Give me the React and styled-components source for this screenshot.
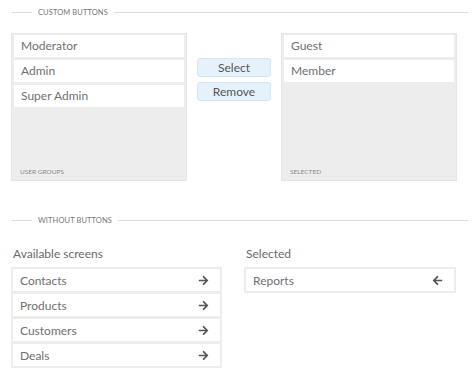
import React from 'react'
import styled, { createGlobalStyle } from 'styled-components'
import { FaArrowRight, FaArrowLeft } from 'react-icons/fa'

const GlobalStyle = createGlobalStyle`
    body {
        margin: 0;
        background: #fff;
        font-family: Lato, "Open Sans", sans-serif;
        color: #666;
    }
`;

function Legend({ children }) {
    return (
        <LegendRow>
            <LegendLine short />
            <LegendText>{children}</LegendText>
            <LegendLine />
        </LegendRow>
    )
}

function ListBox({ items, label }) {
    return (
        <Box>
            {items.map(item => <BoxItem key={item}>{item}</BoxItem>)}
            <BoxLabel>{label}</BoxLabel>
        </Box>
    )
}

function ArrowList({ title, items, direction }) {
    return (
        <Column>
            <ColumnTitle>{title}</ColumnTitle>
            <List>
                {items.map(item => (
                    <ListItem key={item}>
                        {item}
                        <ArrowIcon>{direction === 'left' ? <FaArrowLeft /> : <FaArrowRight />}</ArrowIcon>
                    </ListItem>
                ))}
            </List>
        </Column>
    )
}

function App() {
    return (
        <Page>
            <GlobalStyle />
            <Legend>Custom buttons</Legend>
            <DualList>
                <ListBox items={['Moderator', 'Admin', 'Super Admin']} label="User groups" />
                <Buttons>
                    <Button>Select</Button>
                    <Button>Remove</Button>
                </Buttons>
                <ListBox items={['Guest', 'Member']} label="Selected" />
            </DualList>
            <Legend>Without buttons</Legend>
            <Columns>
                <ArrowList title="Available screens" items={['Contacts', 'Products', 'Customers', 'Deals']} />
                <ArrowList title="Selected" items={['Reports']} direction="left" />
            </Columns>
        </Page>
    )
}

export default App

const Page = styled.div`
    width: 474px;
    height: 375px;
    padding: 6px 6px 0 11px;
    box-sizing: border-box;
    overflow: hidden;
`;

const LegendRow = styled.div`
    display: flex;
    align-items: center;
    height: 12px;
    margin-left: 1px;
`;

const LegendLine = styled.div`
    height: 1px;
    background: #dcdcdc;
    flex: ${p => p.short ? '0 0 20px' : '1'};
`;

const LegendText = styled.span`
    font-size: 7.5px;
    text-transform: uppercase;
    color: #777;
    padding: 0 6px;
    letter-spacing: 0.1px;
`;

const DualList = styled.div`
    display: grid;
    grid-template-columns: 176px 74px 176px;
    column-gap: 10px;
    margin-top: 15px;
    margin-bottom: 33px;
`;

const Box = styled.div`
    height: 148px;
    box-sizing: border-box;
    background: #ededed;
    border: 1px solid #e6e6e6;
    padding: 1px 2px;
    display: flex;
    flex-direction: column;
    gap: 3px;
`;

const BoxItem = styled.div`
    height: 22px;
    background: #fff;
    font-size: 12px;
    line-height: 22px;
    padding-left: 7px;
    color: #707070;
`;

const BoxLabel = styled.div`
    margin-top: auto;
    font-size: 6.5px;
    text-transform: uppercase;
    color: #888;
    padding: 0 0 4px 6px;
`;

const Buttons = styled.div`
    display: flex;
    flex-direction: column;
    gap: 5px;
    padding-top: 25px;
`;

const Button = styled.button`
    height: 19px;
    padding: 0;
    background: #e6f2fb;
    border: 1px solid #d4e6f3;
    border-radius: 3px;
    font-family: inherit;
    font-size: 12px;
    color: #555;
`;

const Columns = styled.div`
    display: grid;
    grid-template-columns: 211px 212px;
    column-gap: 22px;
    margin-top: 21px;
`;

const Column = styled.div`
    display: flex;
    flex-direction: column;
`;

const ColumnTitle = styled.div`
    font-size: 12px;
    line-height: 14px;
    color: #6a6a6a;
    margin-left: 2px;
    margin-bottom: 6px;
`;

const List = styled.div`
    background: #ededed;
    padding: 2px;
    display: flex;
    flex-direction: column;
    gap: 3px;
`;

const ListItem = styled.div`
    height: 22px;
    background: #fff;
    display: flex;
    align-items: center;
    justify-content: space-between;
    font-size: 12px;
    padding: 0 11px 0 7px;
    color: #707070;
`;

const ArrowIcon = styled.span`
    display: flex;
    font-size: 11px;
    color: #555;
`;
